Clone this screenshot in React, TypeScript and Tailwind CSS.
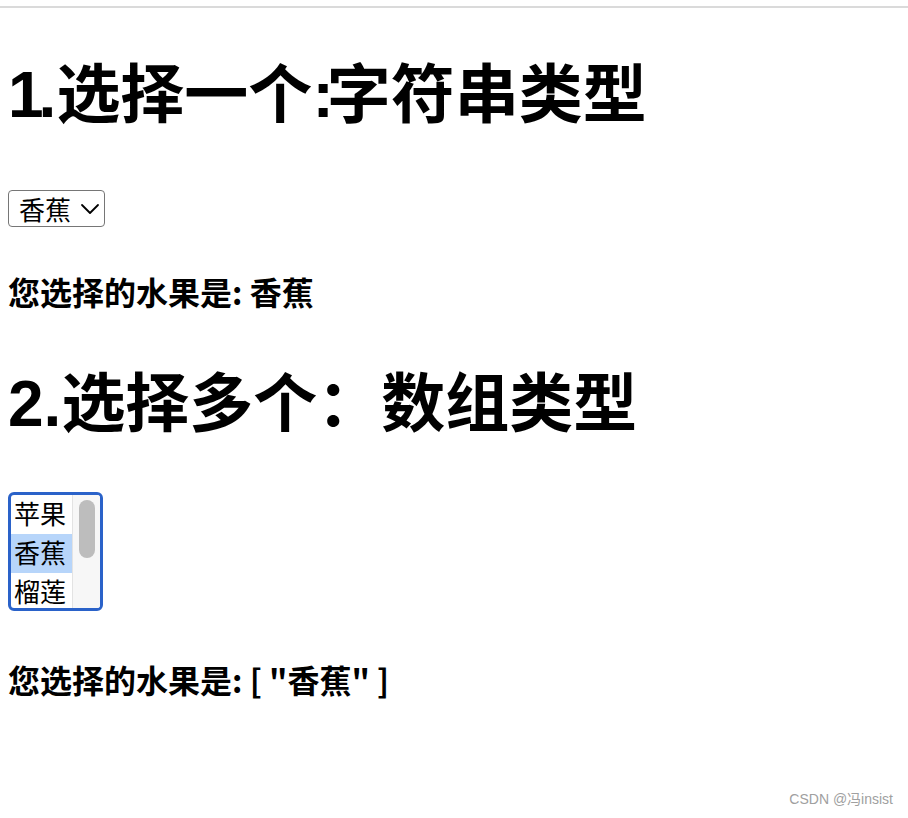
import React from 'react';

const fruits = ['苹果', '香蕉', '榴莲'];

function Chevron() {
  return (
    <svg width="20" height="12" viewBox="0 0 20 12" fill="none" className="shrink-0">
      <path d="M2 2 L10 10 L18 2" stroke="#000" strokeWidth="1.8" strokeLinecap="round" strokeLinejoin="round" />
    </svg>
  );
}

export default function App() {
  const single = '香蕉';
  const multiple = ['香蕉'];

  return (
    <div className="relative min-h-[818px] bg-white text-black font-['Noto_Sans_CJK_SC','Liberation_Sans',sans-serif]">
      {/* top rule */}
      <div className="pt-[6px]">
        <div className="border-t-2 border-[#dadada]" />
      </div>

      <div className="px-2">
        <h1 className="mt-[55px] font-['Liberation_Sans','Noto_Sans_CJK_SC',sans-serif] text-[64px] font-bold leading-[64px]">
          <span className="tracking-[-5px]">1</span>.选择一个<span className="tracking-[-7px]">:</span>字符串类型
        </h1>

        {/* single select */}
        <div className="mt-[63px] flex h-[37px] w-[97px] items-center gap-[9px] rounded-[4px] border border-[#767676] pl-[10px] text-[26px] leading-none">
          <span>{single}</span>
          <Chevron />
        </div>

        <h4 className="mt-[48px] text-[32px] font-bold leading-[32px]">您选择的水果是: {single}</h4>

        <h1 className="mt-[65px] font-['Liberation_Sans','Noto_Sans_CJK_SC',sans-serif] text-[64px] font-bold leading-[64px]">
          2.选择多个：数组类型
        </h1>

        {/* multiple select */}
        <div className="mt-[56px] flex h-[119px] w-[95px] overflow-hidden rounded-[6px] border-[3px] border-[#2a62c9]">
          <div className="flex w-[61px] flex-col">
            {fruits.map((f) => (
              <div
                key={f}
                className={`flex h-[39px] shrink-0 items-center pb-[3px] pl-[3px] text-[26px] leading-none ${
                  multiple.includes(f) ? 'bg-[#b7d5fa]' : ''
                }`}
              >
                {f}
              </div>
            ))}
          </div>
          <div className="flex-1 border-l border-[#e3e3e3] bg-[#f7f7f7] pl-[6px] pt-[5px]">
            <div className="h-[58px] w-[16px] rounded-full bg-[#bdbdbd]" />
          </div>
        </div>

        <h4 className="mt-[52px] text-[32px] font-bold leading-[32px]">
          您选择的水果是: [ "香蕉" ]
        </h4>
      </div>

      <div className="absolute bottom-[8px] right-[15px] font-['Liberation_Sans','Noto_Sans_CJK_SC',sans-serif] text-[14px] text-[#a0a0a0]">
        CSDN @冯insist
      </div>
    </div>
  );
}
